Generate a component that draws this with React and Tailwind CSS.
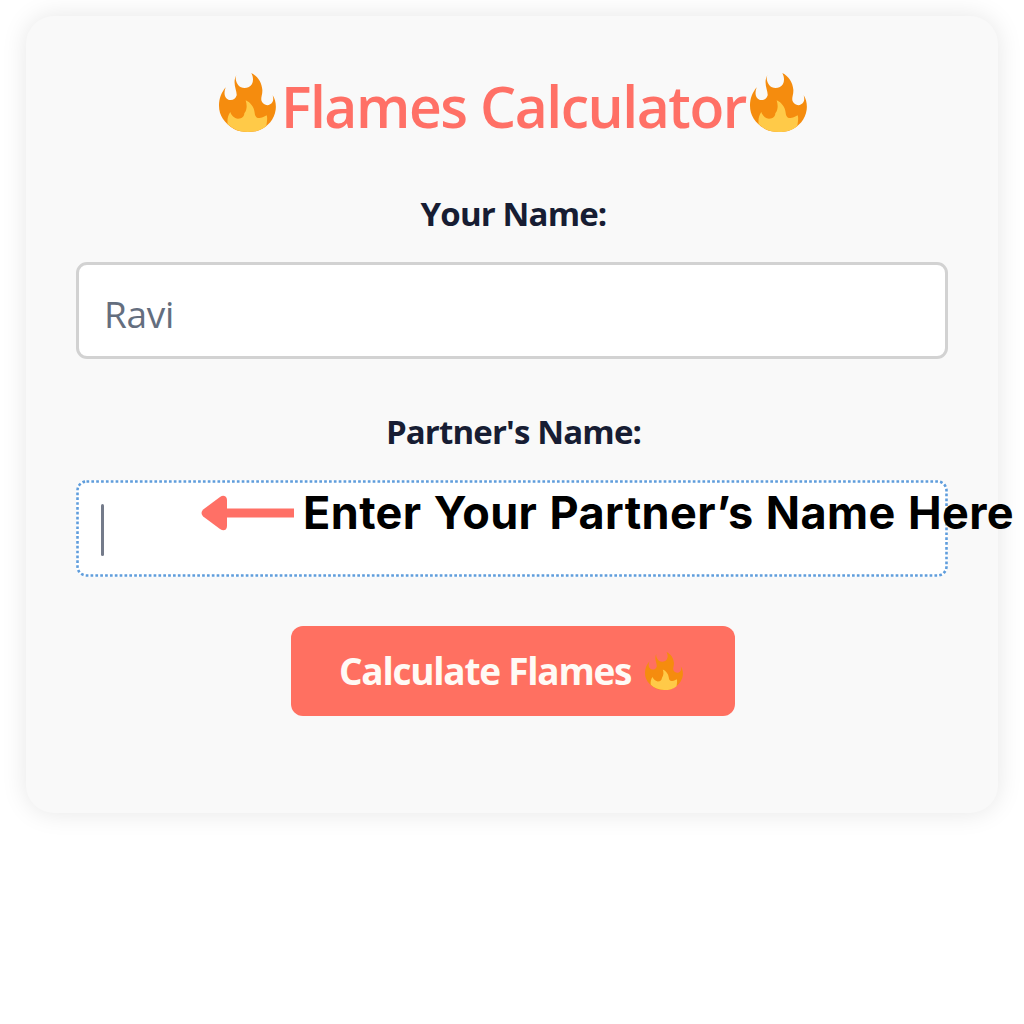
function Flame({ className }) {
  return (
    <svg viewBox="27 24 171 177" preserveAspectRatio="none" className={className} aria-hidden="true">
      <path
        d="M79 31 C73 44 83 62 93 67 C99 70 109 70 115 67 C130 60 133 42 124 24 C143 34 155 51 157 74 C158 90 151 98 155 109 C160 122 179 125 187 112 C191 106 190 99 188 91 C196 102 199 119 197 134 C193 163 174 184 149 195 C139 200 128 201 113 201 C98 201 84 199 72 192 C43 174 27 151 27 122 C27 100 34 84 47 67 C41 83 42 98 55 104 C66 108 77 103 80 91 C81 76 66 55 79 31 Z"
        fill="#f58c0e"
      />
      <path
        d="M107 106 C122 113 132 126 134 143 C135 153 139 160 149 159 C160 158 164 153 170 151 C173 158 171 168 169 183 C155 195 137 201 113 201 C88 201 69 193 53 177 C51 163 54 150 61 141 C64 151 73 160 84 161 C97 161 103 154 103 145 C112 133 111 119 107 106 Z"
        fill="#ffca48"
      />
    </svg>
  );
}

function Label({ children, className }) {
  return (
    <div className="flex h-[46px] justify-center whitespace-nowrap pl-[3px] text-[33px] leading-[46px] font-bold text-[#171d33]">
      <span className={className}>{children}</span>
    </div>
  );
}

export default function App() {
  return (
    <main className="h-[1024px] w-[1024px] overflow-hidden bg-white px-[26px] pt-4 font-['Open_Sans','Noto_Sans',sans-serif]">
      <section className="flex h-[797px] flex-col rounded-[28px] bg-[#f9f9f9] px-[50px] pt-[50px] shadow-[0_0_26px_rgba(0,0,0,0.1)]">
        <h1 className="flex h-[80px] items-start justify-center whitespace-nowrap text-[57px] leading-[80px] font-semibold text-[#ff7066]">
          <Flame className="ml-[2px] mt-[7px] h-[59px] w-[57px] shrink-0" />
          <span className="w-[474px] pl-[5px] tracking-[-1.45px]">Flames Calculator</span>
          <Flame className="mt-[7px] h-[59px] w-[57px] shrink-0" />
        </h1>

        <div className="mt-[45px]">
          <Label className="tracking-[-0.85px]">Your Name:</Label>
          <div className="mt-[25px] flex h-[97px] items-center rounded-[11px] border-[3px] border-[#d2d2d2] bg-white px-[25px] pt-[7px] text-[37px] tracking-[-0.3px] text-[#646e7e]">
            Ravi
          </div>
        </div>

        <div className="mt-[50px]">
          <Label className="tracking-[-0.85px]">Partner&apos;s Name:</Label>
          <div className="relative mt-[25px] flex h-[97px] items-center rounded-[11px] bg-white pl-[25px]">
            <svg className="absolute inset-0 h-full w-full" viewBox="0 0 872 97" fill="none" aria-hidden="true">
              <rect x="1.5" y="1.5" width="869" height="94" rx="9" stroke="#5f9ddc" strokeWidth="2.6" strokeDasharray="2.7 2.15" />
            </svg>
            <span className="mt-[3px] h-[52px] w-[3px] rounded-sm bg-[#747b8a]" />
            <div className="absolute top-[3px] left-[125px] flex h-[60px] items-center">
              <svg className="h-[36px] w-[94px] shrink-0" viewBox="0 0 94 36" aria-hidden="true">
                <path d="M25 13.5 H93 V22.5 H25 Z" fill="#ff7066" />
                <path d="M2.2 14.5 L19 2 Q22 0 24.5 1.5 Q26 2.5 26 5 V31 Q26 33.5 24.5 34.8 Q22 36 19 34 L2.2 21.5 Q-1.2 18 2.2 14.5 Z" fill="#ff7066" />
              </svg>
              <span className="ml-[8px] whitespace-nowrap font-['Inter',sans-serif] text-[45px] leading-[60px] font-bold tracking-[0.4px] [word-spacing:1.2px] text-black">
                Enter Your Partner’s Name Here
              </span>
            </div>
          </div>
        </div>

        <button className="mt-[49px] ml-[215px] flex h-[90px] w-[444px] items-center rounded-[12px] bg-[#ff7061] pl-[48px] text-left text-[37px] font-bold whitespace-nowrap text-[#fffaf5]">
          <span className="w-[306px] tracking-[-1.25px]">Calculate Flames</span>
          <Flame className="h-[38px] w-[38px]" />
        </button>
      </section>
    </main>
  );
}
